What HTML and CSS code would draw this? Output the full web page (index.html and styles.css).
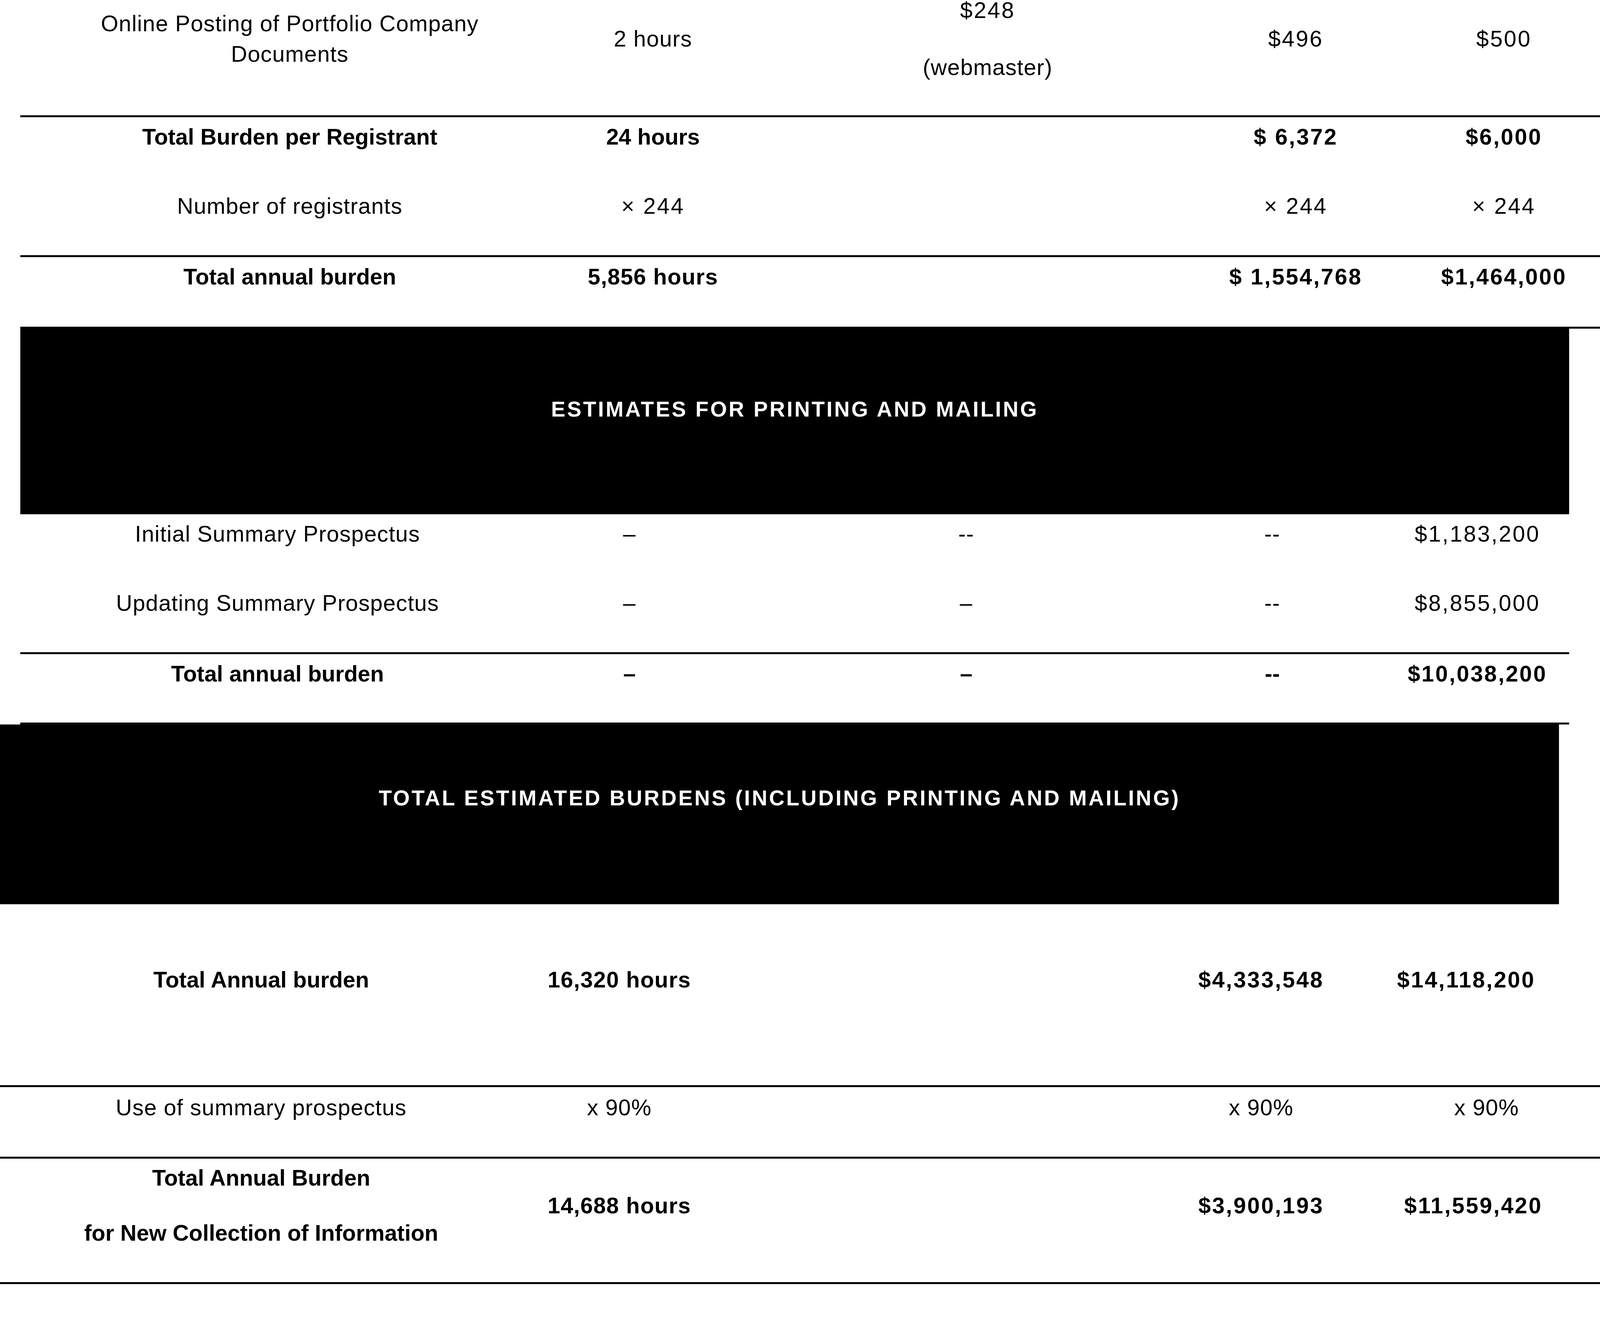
FILE: index.html
```html
<!DOCTYPE html>
<html lang="en">
<head>
<meta charset="utf-8">
<title>Burden estimates</title>
<link rel="stylesheet" href="styles.css">
</head>
<body>
<div class="page">
  <section class="sec sec-a">
    <div class="row row-a a1 ruled">
      <div class="cell"><p>Online Posting of Portfolio Company</p><p>Documents</p></div>
      <div class="cell hrs">2 hours</div>
      <div class="cell"><p class="num">$248</p><p class="sub">(webmaster)</p></div>
      <div class="cell num">$496</div>
      <div class="cell num">$500</div>
    </div>
    <div class="row row-a a2 bold">
      <div class="cell">Total Burden per Registrant</div>
      <div class="cell">24 hours</div>
      <div class="cell"></div>
      <div class="cell num">$ 6,372</div>
      <div class="cell num">$6,000</div>
    </div>
    <div class="row row-a a3 ruled">
      <div class="cell">Number of registrants</div>
      <div class="cell num">× 244</div>
      <div class="cell"></div>
      <div class="cell num">× 244</div>
      <div class="cell num">× 244</div>
    </div>
    <div class="row row-a a4 ruled bold">
      <div class="cell">Total annual burden</div>
      <div class="cell hrs">5,856 hours</div>
      <div class="cell"></div>
      <div class="cell num">$ 1,554,768</div>
      <div class="cell num">$1,464,000</div>
    </div>
  </section>

  <div class="band band-1">ESTIMATES FOR PRINTING AND MAILING</div>

  <section class="sec sec-b">
    <div class="row row-b b1">
      <div class="cell">Initial Summary Prospectus</div>
      <div class="cell">–</div>
      <div class="cell">--</div>
      <div class="cell">--</div>
      <div class="cell num last-b">$1,183,200</div>
    </div>
    <div class="row row-b b2 ruled">
      <div class="cell">Updating Summary Prospectus</div>
      <div class="cell">–</div>
      <div class="cell">–</div>
      <div class="cell">--</div>
      <div class="cell num last-b">$8,855,000</div>
    </div>
    <div class="row row-b b3 ruled bold">
      <div class="cell">Total annual burden</div>
      <div class="cell">–</div>
      <div class="cell">–</div>
      <div class="cell">--</div>
      <div class="cell num last-b">$10,038,200</div>
    </div>
  </section>

  <div class="band band-2">TOTAL ESTIMATED BURDENS (INCLUDING PRINTING AND MAILING)</div>

  <section class="sec sec-c">
    <div class="row row-c c1 ruled bold">
      <div class="cell">Total Annual burden</div>
      <div class="cell hrs">16,320 hours</div>
      <div class="cell"></div>
      <div class="cell num">$4,333,548</div>
      <div class="cell num shift-l">$14,118,200</div>
    </div>
    <div class="row row-c c2 ruled">
      <div class="cell">Use of summary prospectus</div>
      <div class="cell">x 90%</div>
      <div class="cell"></div>
      <div class="cell">x 90%</div>
      <div class="cell shift-r">x 90%</div>
    </div>
    <div class="row row-c c3 ruled bold">
      <div class="cell"><p>Total Annual Burden</p><p class="sub2">for New Collection of Information</p></div>
      <div class="cell hrs">14,688 hours</div>
      <div class="cell"></div>
      <div class="cell num">$3,900,193</div>
      <div class="cell num">$11,559,420</div>
    </div>
  </section>
</div>
</body>
</html>
```

FILE: styles.css
```css
html, body {
  margin: 0;
  padding: 0;
  background: #ffffff;
  overflow: hidden;
}

.page {
  zoom: 2.612;
  width: 1568px;
  height: 1259px;
  overflow: hidden;
  font-family: "Liberation Sans", Arial, sans-serif;
  font-size: 22px;
  line-height: 30px;
  color: #000000;
  letter-spacing: 0.45px;
}

p {
  margin: 0;
}

.sec {
  display: flex;
  flex-direction: column;
}

.sec-a {
  margin-left: 20px;
  width: 1592px;
}

.sec-b {
  margin-left: 20px;
  width: 1518px;
}

.sec-c {
  margin-left: 0;
  width: 1586px;
}

.row {
  display: grid;
  box-sizing: border-box;
  align-items: start;
}

.row-a {
  grid-template-columns: 528px 184px 472px 132px 276px;
}

.row-b {
  grid-template-columns: 504px 186px 474px 126px 228px;
}

.row-c {
  grid-template-columns: 512px 190px 468px 132px 284px;
}

.ruled {
  border-bottom: 2px solid #000000;
}

.cell {
  text-align: center;
  white-space: nowrap;
}

.bold {
  font-weight: bold;
  letter-spacing: 0;
}

.num {
  letter-spacing: 1.3px;
}

.hrs {
  letter-spacing: 0.5px;
}

.sub {
  margin-top: 26px;
  letter-spacing: 0.45px;
}

.sub2 {
  margin-top: 24px;
}

/* section A rows */
.a1 {
  margin-top: -5px;
  height: 120px;
  padding-bottom: 34px;
  align-items: center;
}

.a2 {
  height: 68px;
  padding-top: 4px;
}

.a3 {
  height: 69px;
  padding-top: 4px;
}

.a4 {
  height: 70px;
  padding-top: 4px;
}

/* section B rows */
.b1 {
  height: 68px;
  padding-top: 4px;
}

.b2,
.b3 {
  height: 69px;
  padding-top: 4px;
}

.last-b {
  padding-left: 48px;
}

/* section C rows */
.c1 {
  height: 179px;
  padding-top: 59px;
}

.c2 {
  height: 70px;
  padding-top: 5px;
}

.c3 {
  height: 123px;
  padding-top: 4px;
  padding-bottom: 33px;
  align-items: center;
}

.shift-l {
  padding-right: 14px;
}

.shift-r {
  padding-left: 26px;
}

/* black section bands */
.band {
  box-sizing: border-box;
  background: #000000;
  color: #ffffff;
  text-align: center;
  font-weight: bold;
  font-size: 21px;
  letter-spacing: 1.7px;
  white-space: nowrap;
}

.band-1 {
  margin-left: 20px;
  width: 1518px;
  height: 182px;
  padding-top: 64px;
}

.band-2 {
  margin-left: 0;
  width: 1528px;
  height: 176px;
  padding-top: 57px;
}
```
